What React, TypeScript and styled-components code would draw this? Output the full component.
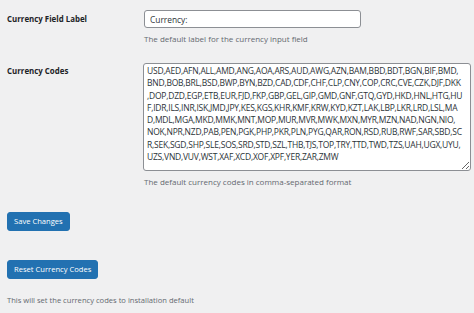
import React, { FC } from "react";
import styled, { createGlobalStyle } from "styled-components";

const codeLines = [
  "USD,AED,AFN,ALL,AMD,ANG,AOA,ARS,AUD,AWG,AZN,BAM,BBD,BDT,BGN,BIF,BMD,",
  "BND,BOB,BRL,BSD,BWP,BYN,BZD,CAD,CDF,CHF,CLP,CNY,COP,CRC,CVE,CZK,DJF,DKK",
  ",DOP,DZD,EGP,ETB,EUR,FJD,FKP,GBP,GEL,GIP,GMD,GNF,GTQ,GYD,HKD,HNL,HTG,HU",
  "F,IDR,ILS,INR,ISK,JMD,JPY,KES,KGS,KHR,KMF,KRW,KYD,KZT,LAK,LBP,LKR,LRD,LSL,MA",
  "D,MDL,MGA,MKD,MMK,MNT,MOP,MUR,MVR,MWK,MXN,MYR,MZN,NAD,NGN,NIO,",
  "NOK,NPR,NZD,PAB,PEN,PGK,PHP,PKR,PLN,PYG,QAR,RON,RSD,RUB,RWF,SAR,SBD,SC",
  "R,SEK,SGD,SHP,SLE,SOS,SRD,STD,SZL,THB,TJS,TOP,TRY,TTD,TWD,TZS,UAH,UGX,UYU,",
  "UZS,VND,VUV,WST,XAF,XCD,XOF,XPF,YER,ZAR,ZMW",
];

const GlobalStyle = createGlobalStyle`
  html, body {
    margin: 0;
    background: #f0f0f1;
    font-family: "Open Sans", "Noto Sans", sans-serif;
    color: #1d2327;
  }
`;

export const App: FC = () => {
  return (
    <Page>
      <GlobalStyle />
      <FormTable>
        <Label>Currency Field Label</Label>
        <Field>
          <TextInput type="text" defaultValue="Currency:" />
          <Description>The default label for the currency input field</Description>
        </Field>

        <Label $top>Currency Codes</Label>
        <Field>
          <CodesArea readOnly defaultValue={codeLines.join("\n")} />
          <Description>The default currency codes in comma-separated format</Description>
        </Field>
      </FormTable>

      <Submit>
        <PrimaryButton>Save Changes</PrimaryButton>
      </Submit>
      <Submit $reset>
        <PrimaryButton>Reset Currency Codes</PrimaryButton>
      </Submit>
      <Note>This will set the currency codes to installation default</Note>
    </Page>
  );
};

const Page = styled.div`
  width: 474px;
  height: 313px;
  box-sizing: border-box;
  padding: 10px 3px 0 7px;
  overflow: hidden;
`;

const FormTable = styled.div`
  display: grid;
  grid-template-columns: 136px 1fr;
  row-gap: 18px;
`;

const Label = styled.div<{ $top?: boolean }>`
  font-size: 7.9px;
  font-weight: 700;
  line-height: ${(p) => (p.$top ? "12px" : "18px")};
  padding-top: ${(p) => (p.$top ? "2px" : "0")};
`;

const Field = styled.div`
  display: flex;
  flex-direction: column;
  align-items: flex-start;
`;

const TextInput = styled.input`
  box-sizing: border-box;
  width: 217px;
  height: 18px;
  margin: 0 0 0 1px;
  padding: 0 5px;
  border: 1px solid #8c8f94;
  border-radius: 3px;
  background: #fff;
  font-family: inherit;
  font-size: 8.4px;
  color: #2c3338;
  outline: none;
`;

const CodesArea = styled.textarea`
  box-sizing: border-box;
  width: 328px;
  height: 108px;
  margin: 0;
  padding: 1px 3px;
  border: 1px solid #8c8f94;
  border-radius: 3px;
  background: #fff;
  font-family: inherit;
  font-size: 8.5px;
  letter-spacing: -0.22px;
  line-height: 12.3px;
  color: #2c3338;
  white-space: pre;
  overflow: hidden;
  resize: vertical;
  outline: none;
`;

const Description = styled.p`
  margin: 5px 0 0 1px;
  font-size: 8px;
  line-height: 12px;
  color: #646970;
`;

const Submit = styled.div<{ $reset?: boolean }>`
  margin-top: ${(p) => (p.$reset ? "24px" : "19px")};
`;

const PrimaryButton = styled.button`
  height: 19px;
  padding: 0 6px;
  border: 1px solid #2271b1;
  border-radius: 3px;
  background: #2271b1;
  color: #fff;
  font-family: inherit;
  font-size: 7.6px;
  line-height: 17px;
  cursor: pointer;
`;

const Note = styled.p`
  margin: 15px 0 0;
  font-size: 7.6px;
  line-height: 12px;
  color: #646970;
`;

export default App;
